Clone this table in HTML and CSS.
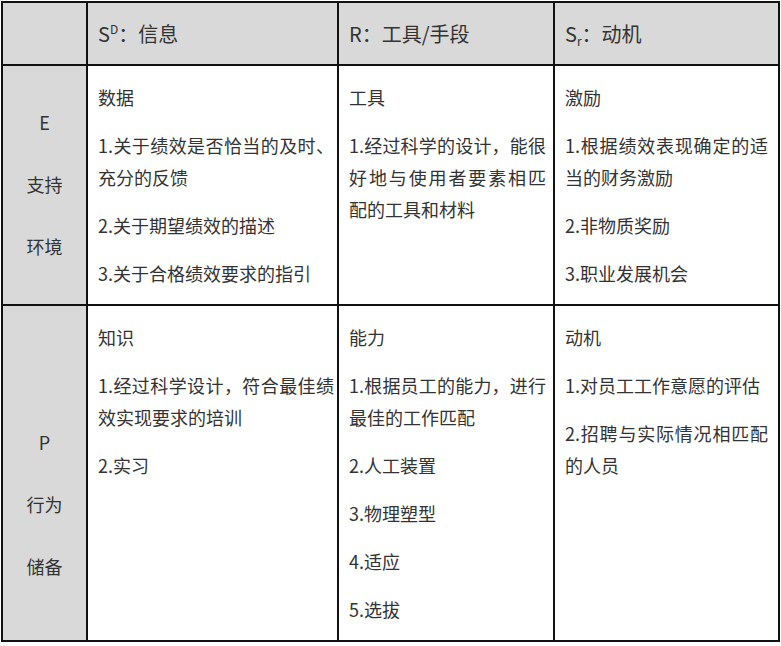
FILE: index.html
```html
<!DOCTYPE html>
<html lang="zh-CN">
<head>
<meta charset="utf-8">
<title>表格</title>
<link rel="stylesheet" href="styles.css">
</head>
<body>
<table class="grid">
  <colgroup>
    <col class="c1">
    <col class="c2">
    <col class="c3">
    <col class="c4">
  </colgroup>
  <thead>
    <tr class="head">
      <th class="corner"></th>
      <th>S<sup class="sup">D</sup>：信息</th>
      <th>R：工具/手段</th>
      <th>S<sub class="sub">r</sub>：动机</th>
    </tr>
  </thead>
  <tbody>
    <tr class="row1">
      <td class="side side1"><p>E</p><p>支持</p><p>环境</p></td>
      <td class="cell cell-a"><p>数据</p><p>1.关于绩效是否恰当的及时、充分的反馈</p><p>2.关于期望绩效的描述</p><p>3.关于合格绩效要求的指引</p></td>
      <td class="cell cell-b"><p>工具</p><p>1.经过科学的设计，能很好地与使用者要素相匹配的工具和材料</p></td>
      <td class="cell"><p>激励</p><p>1.根据绩效表现确定的适当的财务激励</p><p>2.非物质奖励</p><p>3.职业发展机会</p></td>
    </tr>
    <tr class="row2">
      <td class="side side2"><p>P</p><p>行为</p><p>储备</p></td>
      <td class="cell cell-a"><p>知识</p><p>1.经过科学设计，符合最佳绩效实现要求的培训</p><p>2.实习</p></td>
      <td class="cell cell-b"><p>能力</p><p>1.根据员工的能力，进行最佳的工作匹配</p><p>2.人工装置</p><p>3.物理塑型</p><p>4.适应</p><p>5.选拔</p></td>
      <td class="cell"><p>动机</p><p>1.对员工工作意愿的评估</p><p>2.招聘与实际情况相匹配的人员</p></td>
    </tr>
  </tbody>
</table>
</body>
</html>
```

FILE: styles.css
```css
html, body {
  margin: 0;
  padding: 0;
  background: #ffffff;
}

body {
  font-family: "Noto Sans CJK SC", "Noto Sans", sans-serif;
  color: #333333;
}

.grid {
  margin: 1px 0 0 1px;
  border-collapse: collapse;
  table-layout: fixed;
  width: 777px;
}

.c1 { width: 85px; }
.c2 { width: 251px; }
.c3 { width: 216px; }
.c4 { width: 225px; }

.grid th,
.grid td {
  border: 2px solid #111111;
  padding: 0;
}

.grid .head th {
  height: 61px;
  background: #d9d9d9;
  font-weight: normal;
  font-size: 20px;
  text-align: left;
  padding: 0 10px;
  vertical-align: middle;
  color: #333333;
}

.sup {
  font-size: 12px;
  vertical-align: 8px;
  line-height: 0;
}

.sub {
  font-size: 12px;
  vertical-align: -4px;
  line-height: 0;
}

.grid .side {
  background: #d9d9d9;
  text-align: center;
  vertical-align: top;
  font-size: 18px;
}

.side p {
  margin: 0 0 31px;
  line-height: 31px;
}

.side p:last-child {
  margin-bottom: 0;
}

.grid .side1 { padding-top: 41px; }
.grid .side2 { padding-top: 121px; }

.grid .cell {
  vertical-align: top;
  font-size: 18px;
  padding: 15px 10px 15px 10px;
  text-align: justify;
}

.grid .cell-a { padding-right: 3px; }
.grid .cell-b { padding-right: 7px; }

.cell p {
  margin: 0 0 16px;
  line-height: 32px;
}

.cell p:last-child {
  margin-bottom: 0;
}
```
